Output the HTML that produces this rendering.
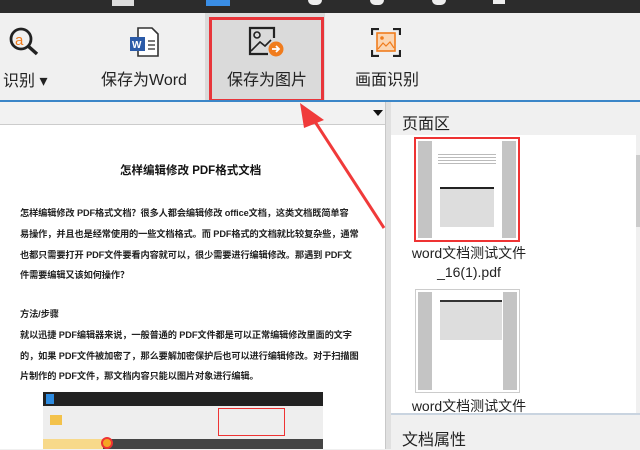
<!DOCTYPE html><html><head><meta charset="utf-8"><style>
*{margin:0;padding:0;box-sizing:border-box}
body{width:640px;height:449px;overflow:hidden;position:relative;background:#f0f0f0;font-family:"Liberation Sans","Noto Sans CJK SC",sans-serif;}
.a{position:absolute}
.lbl{font-size:16px;color:#222;white-space:nowrap}
.doc p{font-size:9.2px;color:#222;white-space:nowrap;position:absolute;left:20px;font-weight:bold;letter-spacing:-0.1px}
</style></head><body>
<div class="a" style="left:0;top:0;width:640px;height:13px;background:#2c2c2c"></div>
<div class="a" style="left:112px;top:0;width:22px;height:6px;background:#ddd"></div>
<div class="a" style="left:206px;top:0;width:24px;height:6px;background:#3a8ee6"></div>
<div class="a" style="left:308px;top:0;width:14px;height:5px;background:#eee;border-radius:0 0 7px 7px"></div>
<div class="a" style="left:370px;top:0;width:14px;height:5px;background:#eee;border-radius:0 0 7px 7px"></div>
<div class="a" style="left:432px;top:0;width:14px;height:5px;background:#eee;border-radius:0 0 7px 7px"></div>
<div class="a" style="left:493px;top:0;width:12px;height:4px;background:#eee"></div>
<div class="a" style="left:0;top:13px;width:640px;height:88px;background:#f0f0f0"></div>
<div class="a" style="left:205px;top:13px;width:120px;height:88px;background:#dadada"></div>
<!-- icons -->
<svg class="a" style="left:8px;top:27px" width="34" height="30"><circle cx="13" cy="12" r="10" fill="none" stroke="#222" stroke-width="2.8"/><line x1="20" y1="19" x2="29" y2="27" stroke="#222" stroke-width="3.5"/><text x="7" y="18" font-size="15" fill="#f07c1d" font-family="Liberation Sans">a</text></svg>
<div class="a lbl" style="left:3px;top:67px">识别 ▾</div>
<svg class="a" style="left:129px;top:26px" width="32" height="32"><path d="M9 2h14l6 6v22H9z" fill="#fff" stroke="#333" stroke-width="1.6"/><rect x="1" y="11" width="15" height="14" fill="#2b5ba8"/><text x="3" y="22" font-size="10" fill="#fff" font-family="Liberation Sans" font-weight="bold">W</text><line x1="19" y1="15" x2="26" y2="15" stroke="#333" stroke-width="1.3"/><line x1="19" y1="19" x2="26" y2="19" stroke="#333" stroke-width="1.3"/><line x1="19" y1="23" x2="26" y2="23" stroke="#333" stroke-width="1.3"/></svg>
<div class="a lbl" style="left:101px;top:66px">保存为Word</div>
<svg class="a" style="left:248px;top:26px" width="38" height="32"><path d="M26 12V2H2v26h18" fill="none" stroke="#222" stroke-width="2.2"/><circle cx="9" cy="9" r="3" fill="none" stroke="#222" stroke-width="1.6"/><path d="M3 25l9-9 5 4 6-6" fill="none" stroke="#222" stroke-width="1.6"/><circle cx="28" cy="23" r="7.5" fill="#f07c1d"/><path d="M24 23h7M28 20l3 3-3 3" stroke="#fff" stroke-width="1.8" fill="none"/></svg>
<div class="a lbl" style="left:227px;top:66px">保存为图片</div>
<svg class="a" style="left:371px;top:28px" width="30" height="29"><path d="M1 7V1h7M22 1h7v6M29 22v6h-7M8 28H1v-6" fill="none" stroke="#222" stroke-width="2.2"/><rect x="6" y="5" width="18" height="18" fill="#fbd6b3" stroke="#f07c1d" stroke-width="1.6"/><path d="M7 21l5-6 3 3 4-4 4 6" fill="none" stroke="#f07c1d" stroke-width="1.2"/><circle cx="11" cy="10" r="1.8" fill="#f07c1d"/></svg>
<div class="a lbl" style="left:355px;top:66px">画面识别</div>
<div class="a" style="left:209px;top:17px;width:115px;height:85px;border:3px solid #e8353a"></div>
<!-- blue separator -->
<div class="a" style="left:0;top:100px;width:640px;height:2px;background:#3b86c8"></div>
<!-- left panel -->
<div class="a" style="left:0;top:102px;width:387px;height:22px;background:#f2f2f2"></div>
<div class="a" style="left:0;top:124px;width:387px;height:1px;background:#ccc"></div>
<div class="a" style="left:373px;top:110px;width:0;height:0;border-left:5px solid transparent;border-right:5px solid transparent;border-top:6px solid #111"></div>
<div class="a" style="left:385px;top:102px;width:6px;height:347px;background:#e0e0e0;border-left:1px solid #c8c8c8"></div>
<div class="a doc" style="left:0;top:125px;width:385px;height:324px;background:#fff">
<div class="a" style="left:120px;top:37px;font-size:11.5px;font-weight:bold;color:#111;white-space:nowrap">怎样编辑修改 PDF格式文档</div>
<p style="top:80px">怎样编辑修改 PDF格式文档？很多人都会编辑修改 office文档，这类文档既简单容</p>
<p style="top:101px">易操作，并且也是经常使用的一些文档格式。而 PDF格式的文档就比较复杂些，通常</p>
<p style="top:122px">也都只需要打开 PDF文件要看内容就可以，很少需要进行编辑修改。那遇到 PDF文</p>
<p style="top:142px">件需要编辑又该如何操作？</p>
<p style="top:181px">方法/步骤</p>
<p style="top:202px">就以迅捷 PDF编辑器来说，一般普通的 PDF文件都是可以正常编辑修改里面的文字</p>
<p style="top:223px">的，如果 PDF文件被加密了，那么要解加密保护后也可以进行编辑修改。对于扫描图</p>
<p style="top:243px">片制作的 PDF文件，那文档内容只能以图片对象进行编辑。</p>
<div class="a" style="left:43px;top:267px;width:280px;height:14px;background:#222"></div>
<div class="a" style="left:46px;top:269px;width:8px;height:10px;background:#2d8be0"></div>
<div class="a" style="left:43px;top:281px;width:280px;height:33px;background:#eeeeee"></div>
<div class="a" style="left:218px;top:283px;width:67px;height:28px;border:1px solid #e33"></div>
<div class="a" style="left:50px;top:290px;width:12px;height:10px;background:#f3c24b"></div>
<div class="a" style="left:43px;top:314px;width:280px;height:10px;background:#444"></div>
<div class="a" style="left:43px;top:314px;width:60px;height:10px;background:#f7d98a"></div>
<div class="a" style="left:101px;top:312px;width:12px;height:12px;border:2px solid #e33;border-radius:50%;background:#f5a623"></div>
</div>
<!-- red arrow -->
<svg class="a" style="left:290px;top:100px" width="110" height="140"><line x1="20" y1="14" x2="94" y2="128" stroke="#f03a3a" stroke-width="3"/><polygon points="10,3 34,20 14,28" fill="#f03a3a"/></svg>
<!-- right panel -->
<div class="a" style="left:391px;top:102px;width:249px;height:33px;background:#f0f0f0"></div>
<div class="a lbl" style="left:402px;top:110px">页面区</div>
<div class="a" style="left:391px;top:135px;width:245px;height:278px;background:#fff"></div>
<div class="a" style="left:636px;top:135px;width:4px;height:278px;background:#f0f0f0"></div>
<div class="a" style="left:636px;top:155px;width:4px;height:72px;background:#ccc"></div>
<div class="a" style="left:414px;top:137px;width:106px;height:105px;border:2px solid #e33;background:#fff"></div>
<div class="a" style="left:418px;top:141px;width:14px;height:97px;background:#c4c4c4"></div>
<div class="a" style="left:502px;top:141px;width:14px;height:97px;background:#c4c4c4"></div>
<div class="a" style="left:440px;top:187px;width:54px;height:40px;background:#ddd;border-top:2px solid #222"></div>
<div class="a" style="left:438px;top:152px;width:58px;height:14px;background:repeating-linear-gradient(#fff 0 2px,#bbb 2px 3px)"></div>
<div class="a" style="left:399px;top:244px;width:140px;text-align:center;font-size:14px;color:#222;line-height:19px">word文档测试文件<br>_16(1).pdf</div>
<div class="a" style="left:415px;top:289px;width:105px;height:104px;border:1px solid #ccc;background:#fff"></div>
<div class="a" style="left:418px;top:292px;width:14px;height:98px;background:#c4c4c4"></div>
<div class="a" style="left:503px;top:292px;width:14px;height:98px;background:#c4c4c4"></div>
<div class="a" style="left:440px;top:300px;width:62px;height:40px;background:#ddd;border-top:2px solid #333"></div>
<div class="a" style="left:399px;top:396px;width:140px;text-align:center;font-size:14px;color:#222">word文档测试文件</div>
<div class="a" style="left:391px;top:413px;width:249px;height:2px;background:#c9d4e0"></div>
<div class="a" style="left:391px;top:415px;width:249px;height:34px;background:#f0f0f0"></div>
<div class="a lbl" style="left:402px;top:426px">文档属性</div>
</body></html>
